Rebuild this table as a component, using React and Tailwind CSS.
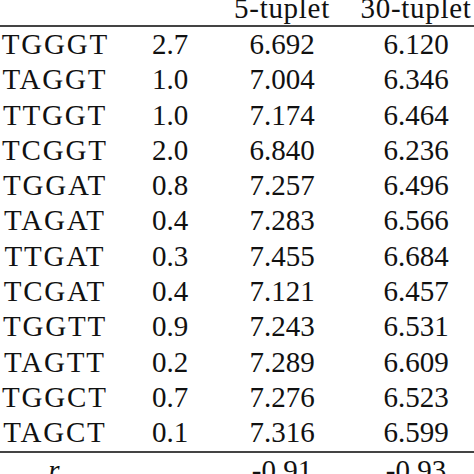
import React from "react";

const rows = [
  ["TGGGT", "2.7", "6.692", "6.120"],
  ["TAGGT", "1.0", "7.004", "6.346"],
  ["TTGGT", "1.0", "7.174", "6.464"],
  ["TCGGT", "2.0", "6.840", "6.236"],
  ["TGGAT", "0.8", "7.257", "6.496"],
  ["TAGAT", "0.4", "7.283", "6.566"],
  ["TTGAT", "0.3", "7.455", "6.684"],
  ["TCGAT", "0.4", "7.121", "6.457"],
  ["TGGTT", "0.9", "7.243", "6.531"],
  ["TAGTT", "0.2", "7.289", "6.609"],
  ["TGGCT", "0.7", "7.276", "6.523"],
  ["TAGCT", "0.1", "7.316", "6.599"],
];

const grid = "grid grid-cols-[108px_124px_100px_138px] whitespace-nowrap";

export default function App() {
  return (
    <div
      className="w-[474px] h-[474px] overflow-hidden bg-white text-[#111] text-[29px]"
      style={{ fontFamily: '"Liberation Serif", "Times New Roman", serif' }}
    >
      <div className={`${grid} h-[25px] leading-[16px] tracking-[0.7px]`}>
        <div />
        <div />
        <div className="text-center">5-tuplet</div>
        <div className="pl-[30px] flex justify-center">
          <span>30-tuplet</span>
        </div>
      </div>
      <div className="h-[2px] bg-[#444]" />
      {rows.map((r) => (
        <div key={r[0]} className={`${grid} h-[35.3px] leading-[35.3px]`}>
          <div className="text-center tracking-[1.8px] pl-[1.8px]">{r[0]}</div>
          <div className="text-center">{r[1]}</div>
          <div className="text-center">{r[2]}</div>
          <div className="pl-[30px] text-center">{r[3]}</div>
        </div>
      ))}
      <div className="h-[2px] bg-[#444]" />
      <div className={`${grid} h-[35.3px] leading-[35.3px]`}>
        <div className="text-center italic">r</div>
        <div />
        <div className="text-center">-0.91</div>
        <div className="pl-[30px] text-center">-0.93</div>
      </div>
    </div>
  );
}
